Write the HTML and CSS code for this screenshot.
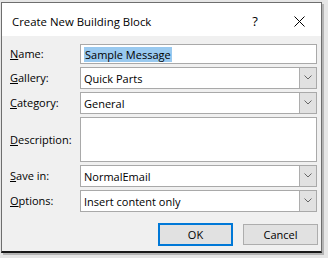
FILE: index.html
```html
<!DOCTYPE html>
<html lang="en">
<head>
  <meta charset="UTF-8">
  <title>Create New Building Block</title>
  <link rel="stylesheet" href="styles.css">
</head>
<body>
  <div class="dialog">
    <div class="titlebar">
      <span class="title">Create New Building Block</span>
      <span class="help">?</span>
      <span class="close">
        <svg width="11" height="11" viewBox="0 0 11 11"><path d="M0.5 0.5L10.5 10.5M10.5 0.5L0.5 10.5" stroke="#000" stroke-width="1"/></svg>
      </span>
    </div>
    <div class="content">
      <div class="form">
        <label><u>N</u>ame:</label>
        <div class="field"><span class="sel">Sample Message</span></div>

        <label><u>G</u>allery:</label>
        <div class="field combo"><span class="value">Quick Parts</span><span class="drop"><svg width="8" height="5" viewBox="0 0 8 5"><path d="M0.5 0.5L4 4L7.5 0.5" fill="none" stroke="#666"/></svg></span></div>

        <label><u>C</u>ategory:</label>
        <div class="field combo"><span class="value">General</span><span class="drop"><svg width="8" height="5" viewBox="0 0 8 5"><path d="M0.5 0.5L4 4L7.5 0.5" fill="none" stroke="#666"/></svg></span></div>

        <label><u>D</u>escription:</label>
        <div class="field area"></div>

        <label><u>S</u>ave in:</label>
        <div class="field combo"><span class="value">NormalEmail</span><span class="drop"><svg width="8" height="5" viewBox="0 0 8 5"><path d="M0.5 0.5L4 4L7.5 0.5" fill="none" stroke="#666"/></svg></span></div>

        <label><u>O</u>ptions:</label>
        <div class="field combo"><span class="value">Insert content only</span><span class="drop"><svg width="8" height="5" viewBox="0 0 8 5"><path d="M0.5 0.5L4 4L7.5 0.5" fill="none" stroke="#666"/></svg></span></div>
      </div>
      <div class="buttons">
        <button class="btn default">OK</button>
        <button class="btn">Cancel</button>
      </div>
    </div>
  </div>
</body>
</html>
```
FILE: styles.css
```css
* { box-sizing: border-box; }
html, body { margin:0; padding:0; }
body {
  background:#e6e6e6;
  font-family:"Open Sans", "Noto Sans", sans-serif;
  font-size:11px;
  color:#000;
  width:328px; height:258px; overflow:hidden;
}
/* Window */
.dialog {
  margin:2px 0 0 1px; width:321px; height:251px;
  border:1px solid #6e6e6e; border-bottom:2px solid #1a1a1a;
  background:#f0f0f0;
  box-shadow:2px 2px 0 #b4b4b4;
  display:flex; flex-direction:column;
}
.titlebar { height:33px; background:#fff; display:flex; align-items:center; padding:3px 0 0 10px; }
.title { flex:1; font-size:11.4px; }
.help { width:44px; text-align:center; font-size:13px; }
.close { width:44px; display:flex; justify-content:center; padding-top:1px; }
/* Form */
.content { flex:1; padding:8px 3px 0 8px; }
.form { display:grid; grid-template-columns:70px 237px; row-gap:3px; align-items:center; }
.form label { line-height:14px; }
.field { height:20px; background:#fff; border:1px solid #a9a9a9; display:flex; align-items:center; padding-left:3px; }
.sel { background:#99c9ef; line-height:15px; padding:0 1px; }
.combo { height:22px; padding-left:0; }
.combo .value { flex:1; padding-left:3px; }
.drop { width:17px; height:20px; background:#e1e1e1; border-left:1px solid #adadad; display:flex; align-items:center; justify-content:center; padding-bottom:1px; }
.area { height:45px; }
/* Buttons */
.buttons { display:flex; justify-content:flex-end; gap:10px; margin-top:11px; }
.btn { width:75px; height:21px; margin-top:1px; background:#e1e1e1; border:1px solid #adadad; font:inherit; padding:0; color:#000; }
.btn.default { height:23px; margin-top:0; border:2px solid #0078d7; }
```
